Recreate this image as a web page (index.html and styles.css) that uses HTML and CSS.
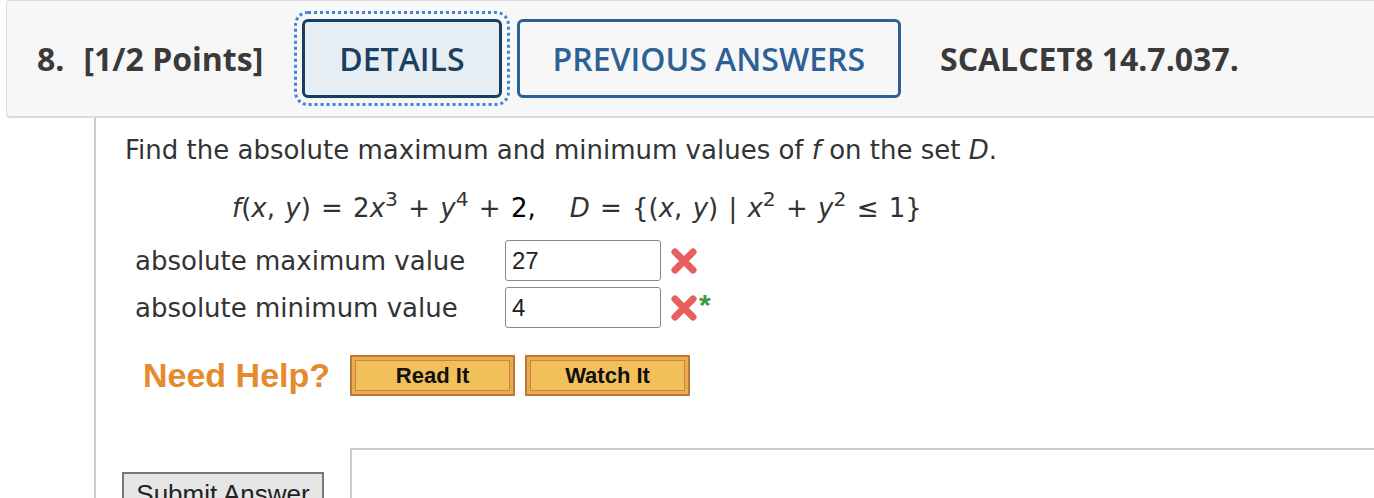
FILE: index.html
```html
<!DOCTYPE html>
<html>
<head>
<meta charset="utf-8">
<link rel="stylesheet" href="styles.css">
</head>
<body>
<div class="page">
  <div class="qhead">
    <span class="qnum">8.</span>
    <span class="qpts">[1/2 Points]</span>
    <button class="tab tab-details">DETAILS</button>
    <button class="tab tab-prev">PREVIOUS ANSWERS</button>
    <span class="qref">SCALCET8 14.7.037.</span>
  </div>
  <div class="qbody">
    <div class="content">
      <p class="prompt">Find the absolute maximum and minimum values of <i>f</i> on the set <i>D</i>.</p>
      <p class="formula"><i>f</i>(<i>x</i>, <i>y</i>) = 2<i>x</i><sup>3</sup> + <i>y</i><sup>4</sup> + <span class="blk">2,</span><span class="sp"></span><i>D</i> = {(<i>x</i>, <i>y</i>) | <i>x</i><sup>2</sup> + <i>y</i><sup>2</sup> ≤ 1}</p>
      <div class="answers">
        <div class="arow">
          <span class="alabel">absolute maximum value</span>
          <span class="abox">27</span>
          <span class="mark"><svg width="28" height="28" viewBox="0 0 28 28"><path d="M5 5 L23 23 M23 5 L5 23" stroke="#e85f5f" stroke-width="7" stroke-linecap="round"/></svg></span>
        </div>
        <div class="arow">
          <span class="alabel">absolute minimum value</span>
          <span class="abox">4</span>
          <span class="mark"><svg width="28" height="28" viewBox="0 0 28 28"><path d="M5 5 L23 23 M23 5 L5 23" stroke="#e85f5f" stroke-width="7" stroke-linecap="round"/></svg><span class="star">*</span></span>
        </div>
      </div>
      <div class="help">
        <span class="needhelp">Need Help?</span>
        <span class="hbtn">Read It</span>
        <span class="hbtn">Watch It</span>
      </div>
    </div>
    <div class="bottom">
      <button class="submit">Submit Answer</button>
      <div class="panel"></div>
    </div>
  </div>
</div>
</body>
</html>
```

FILE: styles.css
```css
html, body { margin: 0; padding: 0; background: #fff; overflow: hidden; }
.page { width: 1420px; height: 498px; }

.qhead {
  display: flex;
  align-items: center;
  box-sizing: border-box;
  height: 118px;
  margin-left: 6px;
  background: #f7f7f7;
  border: 1px solid #dcdcdc;
  border-bottom-width: 2px;
  border-radius: 4px;
  padding-left: 30px;
  font-family: "Open Sans", sans-serif;
  color: #3a3a3a;
}
.qnum, .qpts, .qref { font-weight: 700; font-size: 32px; }
.qpts { margin-left: 19px; }
.tab {
  font-family: "Open Sans", sans-serif;
  font-size: 32px;
  font-weight: 600;
  height: 79px;
  box-sizing: border-box;
  border-radius: 6px;
  padding: 0 34px;
  cursor: pointer;
}
.tab-details {
  margin-left: 39px;
  background: #e7eef3;
  border: 3px solid #183f61;
  color: #1b3f60;
  outline: 3px dotted #3f83dd;
  outline-offset: 5px;
}
.tab-prev {
  margin-left: 15px;
  padding: 0 33px;
  background: #f7f7f7;
  border: 3px solid #2b6197;
  color: #2d6196;
}
.qref { margin-left: 39px; }

.qbody {
  margin-left: 94px;
  border-left: 2px solid #cccccc;
  height: 380px;
}
.content {
  padding-left: 29px;
  font-family: "DejaVu Sans", Verdana, sans-serif;
  color: #333;
  font-size: 26px;
}
.prompt { margin: 0; padding-top: 16px; line-height: 32px; }
.formula { margin: 0; padding-top: 26px; padding-left: 107px; line-height: 32px; word-spacing: 2px; }
.formula sup { font-size: 0.78em; line-height: 0; vertical-align: 0.55em; }
.blk { color: #000; }
.sp { display: inline-block; width: 34px; }

.answers { margin-top: 16px; padding-left: 10px; display: flex; flex-direction: column; gap: 6px; }
.arow { display: flex; align-items: center; }
.alabel { width: 370px; }
.abox {
  box-sizing: border-box;
  width: 156px;
  height: 41px;
  border: 1px solid #8a8a8a;
  border-radius: 3px;
  padding-left: 6px;
  font-family: "Liberation Sans", Arial, sans-serif;
  font-size: 24px;
  color: #222;
  display: flex;
  align-items: center;
}
.mark { display: flex; align-items: center; margin-left: 9px; height: 28px; }
.star { color: #3c9a3c; font-family: "Liberation Sans", Arial, sans-serif; font-weight: 700; font-size: 30px; line-height: 1; align-self: flex-start; margin-top: -4px; margin-left: 1px; }

.help { display: flex; align-items: center; margin-top: 27px; padding-left: 18px; gap: 10px; }
.needhelp {
  font-family: "Liberation Sans", Arial, sans-serif;
  font-weight: 700;
  font-size: 34px;
  color: #e68a2e;
  margin-right: 10px;
}
.hbtn {
  box-sizing: border-box;
  width: 165px;
  height: 41px;
  background: #f2c05b;
  border: 2px solid #b87a3a;
  box-shadow: inset 0 0 0 3px #f0a74e, inset 0 0 0 4px #c08a45;
  font-family: "Liberation Sans", Arial, sans-serif;
  font-weight: 700;
  font-size: 22px;
  color: #111;
  display: flex;
  align-items: center;
  justify-content: center;
}

.bottom { display: flex; align-items: flex-start; margin-top: 52px; }
.submit {
  margin-left: 26px;
  margin-top: 24px;
  width: 202px;
  height: 40px;
  background: #e6e6e6;
  border: 2px solid #777;
  font-family: "Liberation Sans", Arial, sans-serif;
  font-size: 26px;
  color: #222;
  padding: 0;
  line-height: 40px;
  text-align: center;
  vertical-align: top;
}
.panel {
  margin-left: 26px;
  flex: 1;
  height: 100px;
  border-top: 2px solid #cccccc;
  border-left: 2px solid #cccccc;
}
```
